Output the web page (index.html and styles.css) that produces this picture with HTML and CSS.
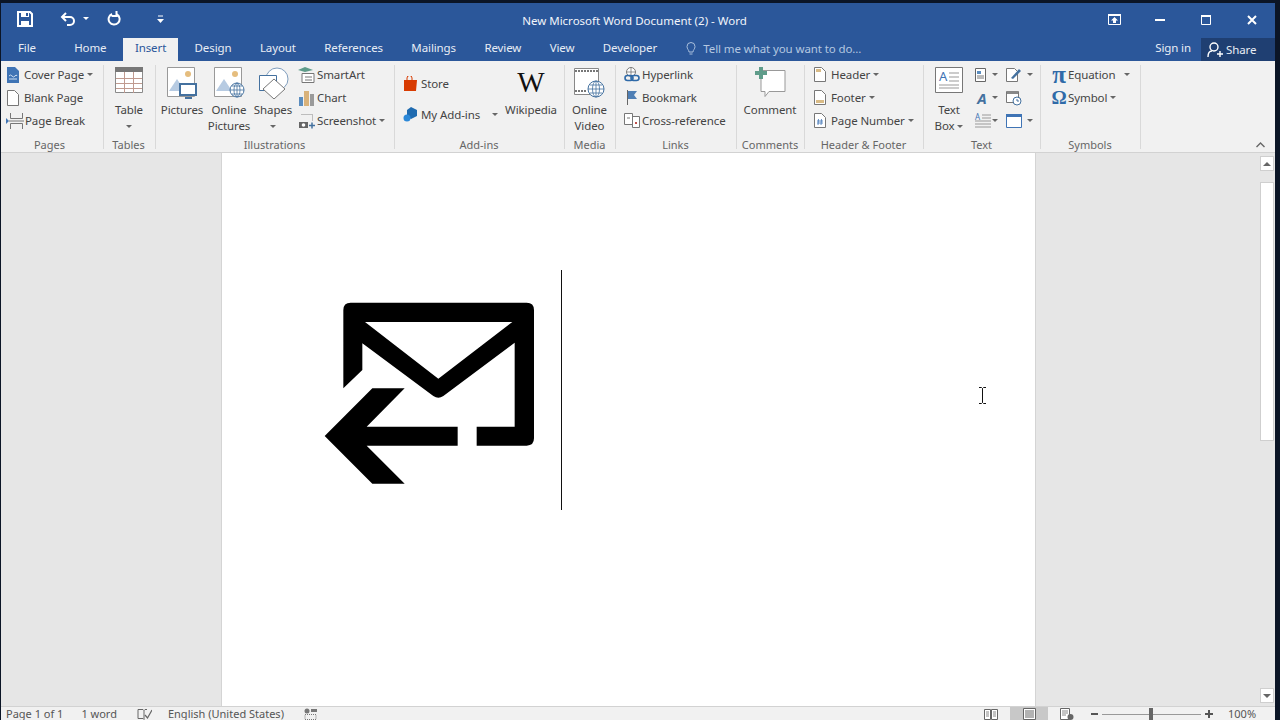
FILE: index.html
```html
<!DOCTYPE html>
<html lang="en">

<head>
    <meta charset="UTF-8">
    <title>New Microsoft Word Document (2) - Word</title>
    <link rel="stylesheet" href="styles.css">
</head>

<body>
    <div class="window">
        <div class="titlebar">
            <div class="quick">
                <svg class="qa-save" width="16" height="16" viewBox="0 0 16 16"><path d="M1 1h12l2 2v12H1z" fill="none" stroke="#fff" stroke-width="2"/><path d="M4 1h8v5H4zM4 10h8v5H4z" fill="#fff"/><path d="M9 2h2v3H9z" fill="#2b579a"/></svg>
                <svg class="qa-undo" width="16" height="14" viewBox="0 0 16 14"><path d="M6 1 2 5l4 4M2 5h8a4 4 0 0 1 0 8H7" fill="none" stroke="#fff" stroke-width="2"/></svg>
                <span class="caret white qa-undo-caret"></span>
                <svg class="qa-redo" width="14" height="15" viewBox="0 0 14 15"><path d="M5 3a5.500 5.500 0 1 0 5 .4M9.500 0v5h-5" fill="none" stroke="#fff" stroke-width="2"/></svg>
                <svg class="qa-more" width="7" height="8" viewBox="0 0 7 8"><path d="M1 1h5" stroke="#fff"/><path d="M0 4h7L3.500 8z" fill="#fff"/></svg>
            </div>
            <div class="title">New Microsoft Word Document (2) - Word</div>
            <div class="controls">
                <div class="control"><svg width="13" height="11" viewBox="0 0 13 11"><path d="M.5.500h12v10H.5z" fill="none" stroke="#fff"/><path d="M0 0h13v2H0zM6.500 3 10 6.500H8V9H5V6.500H3z" fill="#fff"/></svg></div>
                <div class="control"><svg width="10" height="2" viewBox="0 0 10 2"><path d="M0 0h10v2H0z" fill="#fff"/></svg></div>
                <div class="control"><svg width="10" height="10" viewBox="0 0 10 10"><path d="M.5 1.500h9v8h-9z" fill="none" stroke="#fff"/><path d="M0 0h10v2H0z" fill="#fff"/></svg></div>
                <div class="control"><svg width="10" height="10" viewBox="0 0 10 10"><path d="m1 1 8 8M9 1 1 9" stroke="#fff" stroke-width="2"/></svg></div>
            </div>
        </div>

        <div class="tabs">
            <div class="tab tab-file">File</div>
            <div class="tab">Home</div>
            <div class="tab active">Insert</div>
            <div class="tab">Design</div>
            <div class="tab">Layout</div>
            <div class="tab">References</div>
            <div class="tab">Mailings</div>
            <div class="tab">Review</div>
            <div class="tab">View</div>
            <div class="tab">Developer</div>
            <div class="tell">
                <svg width="10" height="14" viewBox="0 0 10 14"><path d="M3 10C3 8 1 7 1 4.500a4 4 0 0 1 8 0C9 7 7 8 7 10zM3.500 12h3" fill="none" stroke="#a9bfdc"/></svg>
                <span>Tell me what you want to do...</span>
            </div>
            <div class="signin">Sign in</div>
            <div class="share">
                <svg width="16" height="15" viewBox="0 0 16 15"><circle cx="7" cy="5" r="4" fill="none" stroke="#fff" stroke-width="1.400"/><path d="M1 15c0-4 2-6 4-6M10 12h6M13 9v6" fill="none" stroke="#fff" stroke-width="1.400"/></svg>
                <span>Share</span>
            </div>
        </div>

        <div class="ribbon">
            <div class="group g-pages">
                <div class="group-body stack">
                    <div class="small"><svg class="ico" width="12" height="16" viewBox="0 0 12 16"><path d="M0 0h8l4 4v12H0z" fill="#3f74b5"/><path d="M2 9q1.500-2 3 0t3 0 2 0M2 12h8" fill="none" stroke="#cfe0f2"/></svg><span>Cover Page</span><span class="caret"></span></div>
                    <div class="small"><svg class="ico" width="12" height="16" viewBox="0 0 12 16"><path d="M.5.500h7l4 4v11H.5z" fill="#fff" stroke="#777"/></svg><span>Blank Page</span></div>
                    <div class="small"><svg class="ico ico-break" width="18" height="16" viewBox="0 0 18 16"><path d="M4.500 0v5.500h12V0M4.500 16v-5.500h12V16M3 8h15" fill="none" stroke="#777"/><path d="M0 5v6l3-3z" fill="#3f74b5"/></svg><span>Page Break</span></div>
                </div>
                <div class="group-label">Pages</div>
            </div>

            <div class="group g-tables">
                <div class="group-body">
                    <div class="large">
                        <svg width="28" height="32" viewBox="0 0 28 32"><path d="M.5.500h27v25H.5z" fill="#fff" stroke="#8a8a8a"/><path d="M0 0h28v5H0z" fill="#777"/><path d="M1 11.500h26M1 16.500h26M1 21.500h26M9.500 5v21M18.500 5v21" stroke="#c09a8f"/></svg>
                        <div class="large-text">Table<br><span class="caret"></span></div>
                    </div>
                </div>
                <div class="group-label">Tables</div>
            </div>

            <div class="group g-illus">
                <div class="group-body">
                    <div class="large w-pictures">
                        <svg width="30" height="32" viewBox="0 0 30 32"><path d="M.5.500h27v29H.5z" fill="#fff" stroke="#999"/><circle cx="21" cy="7" r="3" fill="#e5bd7e"/><path d="M2 24 10 12l8 12z" fill="#b7cbe2"/><path d="M13 17h16v11H13z" fill="#fff" stroke="#44719f" stroke-width="2"/><path d="M18 31h7" stroke="#44719f" stroke-width="2"/></svg>
                        <div class="large-text">Pictures</div>
                    </div>
                    <div class="large w-online">
                        <svg width="31" height="32" viewBox="0 0 31 32"><path d="M.5.500h27v29H.5z" fill="#fff" stroke="#999"/><circle cx="21" cy="7" r="3" fill="#e5bd7e"/><path d="M2 24 10 12l8 12z" fill="#b7cbe2"/><circle cx="23" cy="23" r="7" fill="#fff" stroke="#44719f"/><path d="M16 23h14M23 16v14M18 19h10M18 27h10" stroke="#44719f" stroke-width=".8"/><ellipse cx="23" cy="23" rx="3" ry="7" fill="none" stroke="#44719f" stroke-width=".8"/></svg>
                        <div class="large-text">Online<br>Pictures</div>
                    </div>
                    <div class="large w-shapes">
                        <svg width="31" height="32" viewBox="0 0 31 32"><circle cx="19" cy="12" r="11" fill="#fff" stroke="#7f9dbd"/><path d="M1.500 8.500h17v15h-17z" fill="#fff" stroke="#44719f"/><path d="m16 12 11 10-11 10L5 22z" fill="#fff" stroke="#777"/></svg>
                        <div class="large-text">Shapes<br><span class="caret"></span></div>
                    </div>
                    <div class="stack s-illus">
                        <div class="small"><svg class="ico" width="17" height="16" viewBox="0 0 17 16"><path d="M0 3 7 0l8 3-8 2z" fill="#5f9c8a"/><path d="M4 6.500h12v9H4z" fill="#fff" stroke="#777"/><path d="M7 10h7M7 13h7" stroke="#777"/></svg><span>SmartArt</span></div>
                        <div class="small"><svg class="ico" width="17" height="16" viewBox="0 0 17 16"><path d="M1 7h4v9H1z" fill="#5b8dbf"/><path d="M6 1h5v15H6z" fill="#d9b27a"/><path d="M12 4h4v12h-4z" fill="#9a9a9a"/></svg><span>Chart</span></div>
                        <div class="small"><svg class="ico" width="17" height="16" viewBox="0 0 17 16"><path d="M3.500 1.500h11v7" fill="none" stroke="#888" stroke-dasharray="1 1"/><path d="M1 9h9v6H1z" fill="#666"/><circle cx="5.500" cy="12" r="1.800" fill="#fff"/><path d="M11 12.500h6M14 9.500v6" stroke="#44719f" stroke-width="1.500"/></svg><span>Screenshot</span><span class="caret"></span></div>
                    </div>
                </div>
                <div class="group-label">Illustrations</div>
            </div>

            <div class="group g-addins">
                <div class="group-body">
                    <div class="stack s-addins">
                        <div class="small addin"><svg class="ico" width="15" height="16" viewBox="0 0 15 16"><path d="M1 4h13l-1 11H1z" fill="#d83b01"/><path d="M4 5V2a2.500 2.500 0 0 1 5 0v3" fill="none" stroke="#d83b01"/></svg><span>Store</span></div>
                        <div class="small addin"><svg class="ico" width="15" height="15" viewBox="0 0 15 15"><path d="m8 0 6 3v6l-6 3-4-2V3z" fill="#1f6bb0"/><circle cx="4" cy="11" r="3.500" fill="#2b88d8"/></svg><span>My Add-ins</span><span class="caret wide"></span></div>
                    </div>
                    <div class="large w-wiki">
                        <div class="wiki-w">W</div>
                        <div class="large-text">Wikipedia</div>
                    </div>
                </div>
                <div class="group-label">Add-ins</div>
            </div>

            <div class="group g-media">
                <div class="group-body">
                    <div class="large">
                        <svg width="31" height="32" viewBox="0 0 31 32"><path d="M.5 1.500h24v26H.5z" fill="#fff" stroke="#888"/><path d="M1 4h23M1 24h12" stroke="#777" stroke-width="2" stroke-dasharray="2 1"/><circle cx="22" cy="22" r="8" fill="#fff" stroke="#44719f"/><path d="M14 22h16M22 14v16M16 18h12M16 26h12" stroke="#44719f" stroke-width=".8"/><ellipse cx="22" cy="22" rx="3.500" ry="8" fill="none" stroke="#44719f" stroke-width=".8"/></svg>
                        <div class="large-text">Online<br>Video</div>
                    </div>
                </div>
                <div class="group-label">Media</div>
            </div>

            <div class="group g-links">
                <div class="group-body stack">
                    <div class="small"><svg class="ico" width="16" height="15" viewBox="0 0 16 15"><circle cx="7" cy="5" r="4.500" fill="#fff" stroke="#777"/><path d="M3 5h8M7 1v8" stroke="#777" stroke-width=".8"/><rect x="1" y="8.500" width="8" height="5" rx="2.500" fill="none" stroke="#2f6aa8" stroke-width="1.600"/><rect x="7" y="8.500" width="8" height="5" rx="2.500" fill="none" stroke="#2f6aa8" stroke-width="1.600"/></svg><span>Hyperlink</span></div>
                    <div class="small"><svg class="ico" width="16" height="15" viewBox="0 0 16 15"><path d="M3.500 0v15" stroke="#666"/><path d="M4 1h9l-3 4 3 4H4z" fill="#4f7fb5"/></svg><span>Bookmark</span></div>
                    <div class="small"><svg class="ico" width="16" height="15" viewBox="0 0 16 15"><path d="M.5.500h8v11h-8zM8.500 3.500h7v11h-7z" fill="#fff" stroke="#777"/><path d="M3 5h3" stroke="#777"/><path d="M11 9h2v2h-2z" fill="#c0504d"/></svg><span>Cross-reference</span></div>
                </div>
                <div class="group-label">Links</div>
            </div>

            <div class="group g-comments">
                <div class="group-body">
                    <div class="large">
                        <svg width="31" height="32" viewBox="0 0 31 32"><path d="M6 3.500h24v21H14l-4 5v-5H6z" fill="#fff" stroke="#999"/><path d="M4 0h4v4h4v4H8v4H4V8H0V4h4z" fill="#5f9c8a"/></svg>
                        <div class="large-text">Comment</div>
                    </div>
                </div>
                <div class="group-label">Comments</div>
            </div>

            <div class="group g-header">
                <div class="group-body stack">
                    <div class="small"><svg class="ico" width="12" height="15" viewBox="0 0 12 15"><path d="M.5.500h7l4 4v10H.5z" fill="#fff" stroke="#777"/><path d="M2 2h5v3H2z" fill="#d9bb86"/></svg><span>Header</span><span class="caret"></span></div>
                    <div class="small"><svg class="ico" width="12" height="15" viewBox="0 0 12 15"><path d="M.5.500h7l4 4v10H.5z" fill="#fff" stroke="#777"/><path d="M2 10h8v3H2z" fill="#d9bb86"/></svg><span>Footer</span><span class="caret"></span></div>
                    <div class="small"><svg class="ico" width="12" height="15" viewBox="0 0 12 15"><path d="M.5.500h7l4 4v10H.5z" fill="#fff" stroke="#777"/><path d="M4.500 6 4 12M7.500 6 7 12M3 8h6M3 10h6" stroke="#3f74b5" stroke-width=".8"/></svg><span>Page Number</span><span class="caret"></span></div>
                </div>
                <div class="group-label">Header &amp; Footer</div>
            </div>

            <div class="group g-text">
                <div class="group-body">
                    <div class="large w-textbox">
                        <svg width="28" height="32" viewBox="0 0 28 32"><path d="M.5.500h27v25H.5z" fill="#fff" stroke="#777"/><text x="4" y="14" class="svg-a">A</text><path d="M14 6h10M14 10h10M14 14h10M4 18h20M4 21h20" stroke="#999"/></svg>
                        <div class="large-text">Text<br>Box <span class="caret"></span></div>
                    </div>
                    <div class="text-grid">
                        <div class="cell"><svg width="12" height="14" viewBox="0 0 12 14"><path d="M.5.500h10v13H.5z" fill="#fff" stroke="#666"/><path d="M2 3h4v3H2z" fill="#5b8dbf"/><path d="M2 8h7M2 10h7" stroke="#777"/></svg><span class="caret"></span></div>
                        <div class="cell"><svg width="16" height="15" viewBox="0 0 16 15"><path d="M.5 1.500h8l3 3v10H.5z" fill="#fff" stroke="#777"/><path d="m5 11 8-9 2 2-8 8z" fill="#44719f"/></svg><span class="caret"></span></div>
                        <div class="cell"><span class="wordart">A</span><span class="caret"></span></div>
                        <div class="cell"><svg width="16" height="16" viewBox="0 0 16 16"><path d="M.5 1.500h12v11H.5z" fill="#fff" stroke="#777"/><path d="M1 1h11v3H1z" fill="#888"/><circle cx="11" cy="11" r="4" fill="#fff" stroke="#44719f"/><path d="M11 9v2h2" stroke="#44719f" fill="none"/></svg></div>
                        <div class="cell"><svg class="svg-open" width="17" height="14" viewBox="0 0 17 14"><text x="0" y="6" class="svg-a-small">A</text><path d="M7 1h9M7 4h9M0 7h16M0 10h16M0 13h16" stroke="#999"/></svg><span class="caret"></span></div>
                        <div class="cell"><svg width="16" height="14" viewBox="0 0 16 14"><path d="M.5.500h15v13H.5z" fill="#fff" stroke="#3f74b5"/><path d="M0 0h16v3H0z" fill="#3f74b5"/></svg><span class="caret"></span></div>
                    </div>
                </div>
                <div class="group-label">Text</div>
            </div>

            <div class="group g-symbols">
                <div class="group-body stack">
                    <div class="small"><span class="sym sym-pi">π</span><span>Equation</span><span class="caret wide"></span></div>
                    <div class="small"><span class="sym">Ω</span><span>Symbol</span><span class="caret"></span></div>
                </div>
                <div class="group-label">Symbols</div>
            </div>

            <div class="collapse"><svg width="9" height="6" viewBox="0 0 9 6"><path d="m.5 5 4-4 4 4" fill="none" stroke="#666" stroke-width="1.400"/></svg></div>
        </div>

        <div class="workspace">
            <div class="canvas">
                <div class="page">
                    <svg width="240" height="240" viewBox="33 30 720 720">
                        <path fill-rule="evenodd" d="M100 385V150q0-22 22-22H650q22 0 22 22V535q0 22-22 22H500V500H614V248L400 408q-15 10-30 0L157 250V330ZM165 186H607L385 356Z"/>
                        <path d="M44 528 187 385H284L170 500H443V557H170L284 671H187Z"/>
                    </svg>
                    <div class="text-caret"></div>
                </div>
            </div>
            <div class="scrollbar">
                <div class="sb-btn"><span class="sb-up"></span></div>
                <div class="sb-thumb"></div>
                <div class="sb-btn"><span class="sb-down"></span></div>
            </div>
            <svg class="ibeam" width="7" height="17" viewBox="0 0 7 17"><path d="M0 .5h2.500l1 1 1-1H7M3.500 1.500v14M0 16.500h2.500l1-1 1 1H7" fill="none" stroke="#111"/></svg>
        </div>

        <div class="statusbar">
            <span class="st-page">Page 1 of 1</span>
            <span class="st-words">1 word</span>
            <svg class="st-proof" width="15" height="12" viewBox="0 0 15 12"><path d="M1 1.500h5l1 1 1-1h2M1 1.500v9h5l1 1M7 2.500v9" fill="none" stroke="#666"/><path d="m8 7 2.500 3L15 2" fill="none" stroke="#666" stroke-width="1.200"/></svg>
            <span class="st-lang">English (United States)</span>
            <svg class="st-macro" width="13" height="12" viewBox="0 0 13 12"><circle cx="3" cy="3" r="2.500" fill="#777"/><path d="M7 1h6v3H7z" fill="#777"/><path d="M1 6.500h11v5H1z" fill="none" stroke="#777" stroke-dasharray="1 1"/></svg>
            <div class="st-right">
                <div class="view"><svg width="14" height="12" viewBox="0 0 14 12"><path d="M.5 1.500h6v10h-6zM7.500 1.500h6v10h-6z" fill="#fff" stroke="#666"/><path d="M2 4h3M2 6h3M2 8h3M9 4h3M9 6h3M9 8h3" stroke="#888"/></svg></div>
                <div class="view active"><svg width="13" height="12" viewBox="0 0 13 12"><path d="M.5.500h12v11H.5z" fill="#fff" stroke="#666"/><path d="M2 3h9M2 5h9M2 7h9M2 9h9" stroke="#666"/></svg></div>
                <div class="view"><svg width="14" height="12" viewBox="0 0 14 12"><path d="M.5.500h9v11H.5z" fill="#fff" stroke="#666"/><path d="M2 3h6M2 5h6M2 7h4" stroke="#888"/><circle cx="10.500" cy="9" r="3" fill="#666"/></svg></div>
                <div class="zoom-minus"></div>
                <div class="slider"><div class="slider-thumb"></div></div>
                <div class="zoom-plus"></div>
                <span class="zoom-value">100%</span>
            </div>
        </div>
    </div>
</body>

</html>
```
FILE: styles.css
```css
html, body {
    margin: 0;
    height: 100%;
    overflow: hidden;
}

body {
    font-family: "Noto Sans", "Open Sans", sans-serif;
    font-size: 11.5px;
    letter-spacing: -0.1px;
    color: #444;
    background-color: #0b1526;
}

svg {
    display: block;
    flex: none;
}

.window {
    height: 720px;
    box-sizing: border-box;
    padding: 3px 5px 0 1px;
    display: flex;
    flex-direction: column;
}

/* title bar */
.titlebar {
    height: 35px;
    background-color: #2b579a;
    color: white;
    display: grid;
    grid-template-columns: 1fr auto 1fr;
    align-items: center;
}

.quick {
    display: flex;
    align-items: center;
    margin-bottom: 4px;
}

.qa-save {
    margin-left: 16px;
}

.qa-undo {
    margin-left: 27px;
}

.qa-undo-caret {
    margin-left: 7px;
}

.qa-redo {
    margin-left: 18px;
}

.qa-more {
    margin-left: 36px;
}

.title {
    padding-right: 7px;
    letter-spacing: 0;
    color: #f2f5fa;
}

.controls {
    display: flex;
    justify-content: flex-end;
    margin-bottom: 2px;
}

.control {
    width: 46px;
    height: 30px;
    display: flex;
    align-items: center;
    justify-content: center;
}

/* tabs */
.tabs {
    height: 23px;
    background-color: #2b579a;
    color: #e8edf5;
    display: flex;
    align-items: stretch;
}

.tab {
    padding: 0 14.2px;
    line-height: 20px;
}

.tab-file {
    padding: 0 24px 0 17px;
}

.tab.active {
    margin: 0 2.5px;
    padding: 0 11.7px;
    background-color: #f1f1f1;
    color: #2b579a;
}

.tell {
    margin-left: 15px;
    padding-bottom: 2px;
    display: flex;
    align-items: center;
    gap: 7px;
    color: #b4c7e0;
}

.signin {
    margin-left: auto;
    line-height: 20px;
    padding-right: 10px;
}

.share {
    width: 74px;
    background-color: #1f3f72;
    display: flex;
    align-items: center;
    gap: 3px;
    padding-left: 6px;
    box-sizing: border-box;
}

/* ribbon */
.ribbon {
    height: 92px;
    background-color: #f1f1f1;
    border-bottom: 1px solid #d2d2d2;
    box-sizing: border-box;
    display: flex;
    position: relative;
}

.group {
    box-sizing: border-box;
    display: flex;
    flex-direction: column;
    position: relative;
}

.group::after {
    content: "";
    position: absolute;
    right: -1px;
    top: 4px;
    bottom: 3px;
    width: 1px;
    background-color: #d9d9d9;
}

.g-pages { width: 102px; }
.g-tables { width: 52px; }
.g-illus { width: 239px; }
.g-addins { width: 170px; }
.g-media { width: 51px; }
.g-links { width: 121px; }
.g-comments { width: 68px; }
.g-header { width: 119px; }
.g-text { width: 117px; }
.g-symbols { width: 100px; }

.group-body {
    height: 76px;
    padding-top: 2px;
    box-sizing: border-box;
    display: flex;
}

.group-body.stack {
    flex-direction: column;
}

.g-pages .group-body { padding-left: 6px; }
.g-illus .group-body { padding-left: 4px; }
.g-addins .group-body { padding-left: 9px; }
.g-links .group-body { padding-left: 9px; }
.g-header .group-body { padding-left: 10px; }
.g-text .group-body { padding-left: 6px; }
.g-symbols .group-body { padding-left: 10px; }

.stack {
    display: flex;
    flex-direction: column;
}

.group-label {
    height: 15px;
    line-height: 15px;
    font-size: 11px;
    letter-spacing: 0;
    text-align: center;
    color: #666;
}

.g-pages .group-label {
    padding-right: 5px;
}

.g-tables .group-label {
    padding-right: 1px;
}

.small {
    height: 23px;
    display: flex;
    align-items: center;
    white-space: nowrap;
}

.small .ico {
    margin-right: 5px;
}

.small .caret {
    margin-left: 3px;
}

.small .ico-break {
    margin: 0 1px 0 -1px;
}

.g-links .small .ico,
.s-illus .small .ico {
    margin-right: 2px;
}

.s-illus {
    margin-left: 5px;
}

.s-addins {
    width: 103px;
    padding-top: 9px;
    gap: 8px;
}

.addin {
    gap: 3px;
}

.small.addin .ico {
    margin-right: 0;
}

.caret {
    display: inline-block;
    width: 0;
    height: 0;
    border-left: 3px solid transparent;
    border-right: 3px solid transparent;
    border-top: 3px solid #666;
    vertical-align: middle;
}

.caret.white {
    border-top-color: white;
}

.small .caret.wide {
    margin-left: 9px;
}

.large {
    flex: 1;
    display: flex;
    flex-direction: column;
    align-items: center;
}

.large > svg {
    margin: 4px 0 3px;
}

.large-text {
    text-align: center;
    line-height: 16px;
    white-space: nowrap;
}

.w-pictures { flex: none; width: 46px; }
.w-online { flex: none; width: 48px; }
.w-shapes { flex: none; width: 40px; }
.w-wiki { flex: none; width: 50px; }
.w-textbox { flex: none; width: 40px; }

.wiki-w {
    height: 39px;
    line-height: 38px;
    font-family: "Liberation Serif", serif;
    font-size: 29px;
    letter-spacing: 0;
    color: #111;
}

.text-grid {
    display: grid;
    grid-template-columns: 23px 27px;
    grid-auto-rows: 23px;
    column-gap: 8px;
    margin-left: 6px;
}

.cell {
    display: flex;
    align-items: center;
    justify-content: space-between;
}

.wordart {
    width: 14px;
    text-align: center;
    font-size: 15px;
    font-style: italic;
    font-weight: bold;
    color: #44719f;
}

.svg-a {
    font-size: 13px;
    fill: #3f74b5;
}

.svg-a-small {
    font-size: 8px;
    fill: #3f74b5;
}

.svg-open {
    overflow: visible;
}

.sym {
    width: 18px;
    text-align: center;
    font-family: "Liberation Serif", serif;
    font-size: 19px;
    font-weight: bold;
    line-height: 20px;
    color: #2f6aa8;
}

.sym-pi {
    font-size: 25px;
}

.collapse {
    position: absolute;
    right: 10px;
    bottom: 4px;
}

/* document area */
.workspace {
    flex: 1;
    min-height: 0;
    display: flex;
    background-color: #e6e6e6;
    position: relative;
}

.canvas {
    flex: 1;
    overflow: hidden;
}

.page {
    width: 815px;
    height: 100%;
    margin-left: 220px;
    box-sizing: border-box;
    padding: 117px 0 0 99px;
    background-color: white;
    border-left: 1px solid #d4d4d4;
    border-right: 1px solid #d4d4d4;
    display: flex;
    align-items: flex-start;
}

.text-caret {
    width: 1px;
    height: 240px;
    background-color: #111;
}

.scrollbar {
    width: 15px;
    display: flex;
    flex-direction: column;
    padding: 3px 1px 3px 0;
    box-sizing: border-box;
}

.sb-btn {
    height: 15px;
    background-color: white;
    border: 1px solid #cfcfcf;
    box-sizing: border-box;
    display: flex;
    align-items: center;
    justify-content: center;
}

.sb-up, .sb-down {
    width: 0;
    height: 0;
    border-left: 4px solid transparent;
    border-right: 4px solid transparent;
}

.sb-up {
    border-bottom: 4px solid #666;
}

.sb-down {
    border-top: 4px solid #666;
}

.sb-thumb {
    height: 259px;
    margin: 11px 0 auto;
    background-color: white;
    border: 1px solid #cfcfcf;
    box-sizing: border-box;
}

.ibeam {
    position: absolute;
    left: 978px;
    top: 234px;
}

/* status bar */
.statusbar {
    height: 14px;
    background-color: #f1f1f1;
    border-top: 1px solid #d2d2d2;
    box-sizing: border-box;
    display: flex;
    align-items: flex-start;
    font-size: 11px;
    letter-spacing: 0;
    line-height: 13px;
    color: #555;
    overflow: hidden;
}

.statusbar svg {
    margin-top: 1px;
}

.st-page {
    margin-left: 5px;
}

.st-words {
    margin-left: 18px;
}

.st-proof {
    margin-left: 20px;
}

.st-lang {
    margin-left: 16px;
}

.st-macro {
    margin-left: 20px;
}

.st-right {
    margin-left: auto;
    display: flex;
    align-items: flex-start;
}

.view {
    width: 38px;
    height: 13px;
    display: flex;
    justify-content: center;
}

.view.active {
    background-color: #c8c8c8;
}

.zoom-minus, .zoom-plus {
    height: 2px;
    margin-top: 6px;
    background-color: #555;
    position: relative;
}

.zoom-minus {
    width: 7px;
    margin-left: 5px;
}

.zoom-plus {
    width: 8px;
}

.zoom-plus::after {
    content: "";
    position: absolute;
    left: 3px;
    top: -3px;
    width: 2px;
    height: 8px;
    background-color: #555;
}

.slider {
    width: 99px;
    height: 1px;
    margin: 7px 4px 0;
    background-color: #999;
    position: relative;
}

.slider-thumb {
    position: absolute;
    left: 47px;
    top: -6px;
    width: 4px;
    height: 14px;
    background-color: #666;
}

.zoom-value {
    width: 29px;
    margin: 0 18px 0 15px;
}
```
